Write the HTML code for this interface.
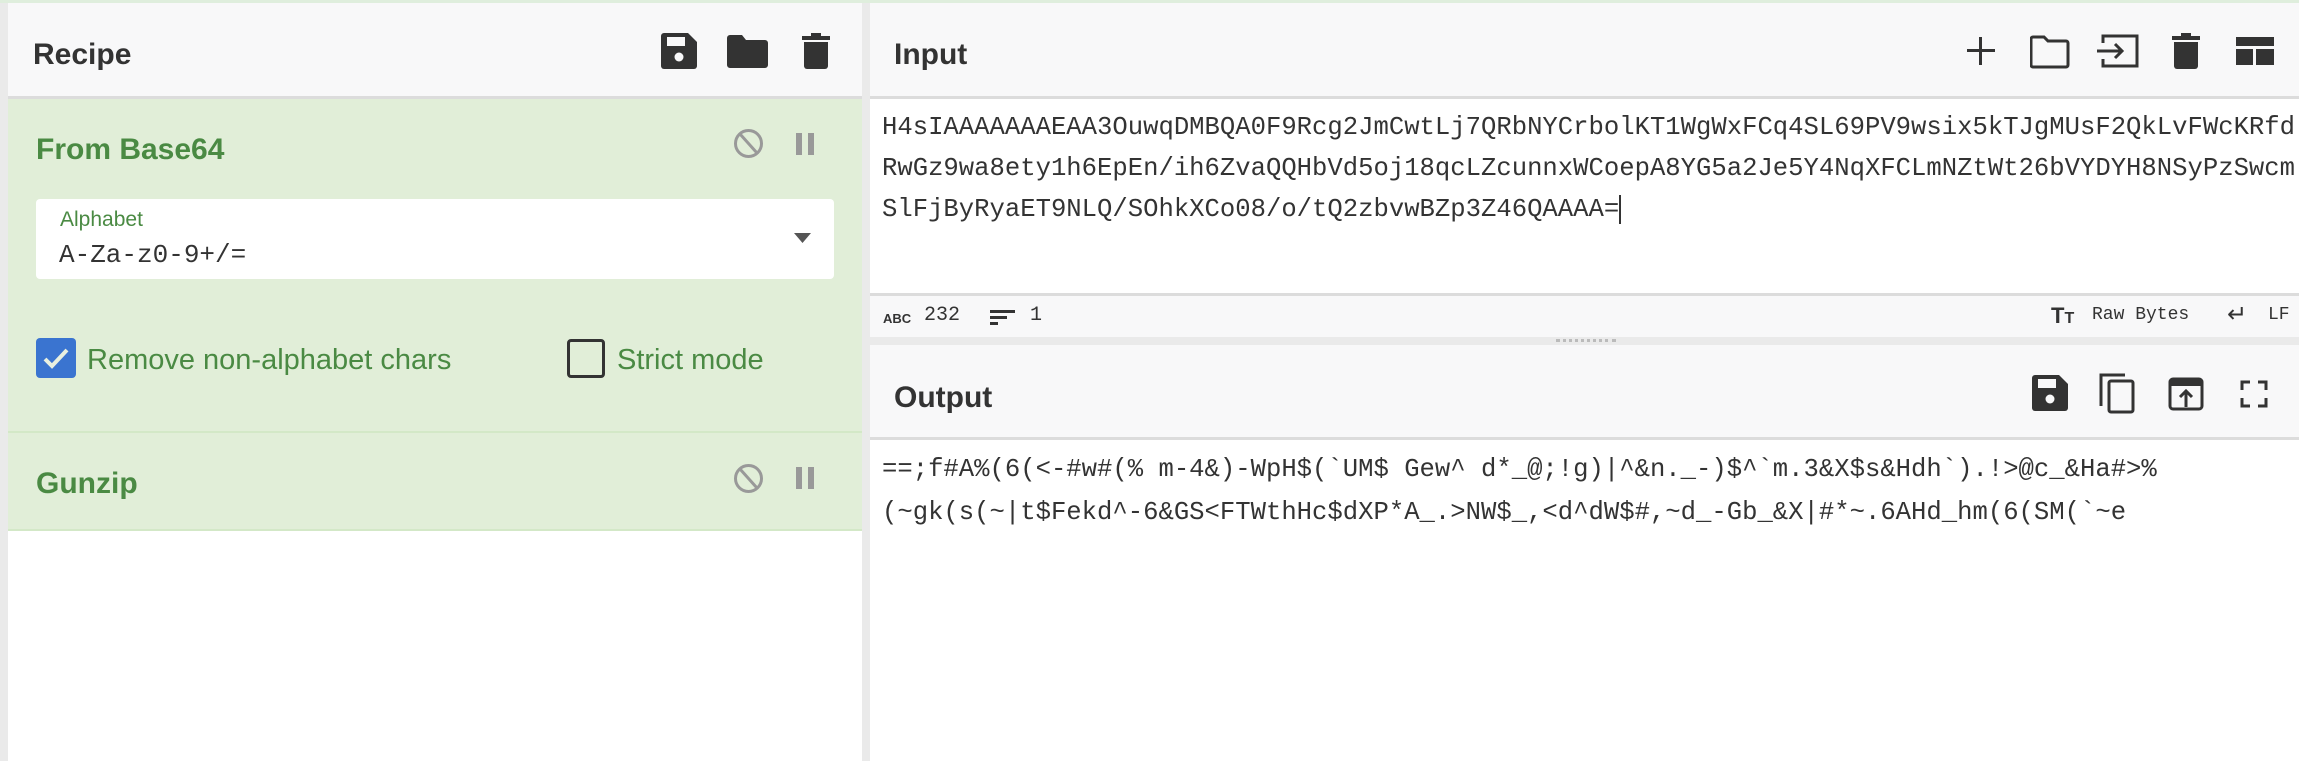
<!DOCTYPE html>
<html><head><style>
*{box-sizing:border-box;margin:0;padding:0}
body{width:2299px;height:761px;overflow:hidden;background:#eaeaea;font-family:"Liberation Sans",sans-serif;position:relative}
.a{position:absolute}
.mono{font-family:"Liberation Mono",monospace}
.hdr{background:#f8f8f9;border-bottom:3px solid #dcdcdc}
.t{font-size:30px;font-weight:bold;color:#333}
.g{color:#4a8a43}
svg{position:absolute}
</style></head><body>
<div class="a" style="left:0;top:0;width:2299px;height:3px;background:#dfeedd"></div>
<div class="a hdr" style="left:8px;top:3px;width:854px;height:96px"></div>
<div class="a t" style="left:33px;top:38px">Recipe</div>
<svg style="left:661px;top:33px" width="36" height="36" viewBox="0 0 36 36"><path d="M3 0h24l9 9v24a3 3 0 0 1-3 3H3a3 3 0 0 1-3-3V3a3 3 0 0 1 3-3z" fill="#333"/><rect x="6" y="4" width="18" height="9" fill="#f8f8f9"/><circle cx="18" cy="24" r="4.5" fill="#f8f8f9"/></svg>
<svg style="left:727px;top:35px" width="41" height="33" viewBox="0 0 41 33"><path d="M3 0h12l4 5h19a3 3 0 0 1 3 3v22a3 3 0 0 1-3 3H3a3 3 0 0 1-3-3V3a3 3 0 0 1 3-3z" fill="#333"/></svg>
<svg style="left:802px;top:33px" width="28" height="36" viewBox="0 0 28 36"><rect x="0" y="3" width="28" height="4" fill="#333"/><rect x="9" y="0" width="10" height="4" fill="#333"/><path d="M2 9h24v24a3 3 0 0 1-3 3H5a3 3 0 0 1-3-3z" fill="#333"/></svg>
<div class="a" style="left:8px;top:99px;width:854px;height:431px;background:#e1eed8"></div>
<div class="a" style="left:8px;top:431px;width:854px;height:2px;background:#d3e8c7"></div>
<div class="a" style="left:8px;top:529px;width:854px;height:2px;background:#d3e8c7"></div>
<div class="a" style="left:8px;top:531px;width:854px;height:230px;background:#fff"></div>
<div class="a t g" style="left:36px;top:133px">From Base64</div>
<div class="a t g" style="left:36px;top:467px">Gunzip</div>
<svg style="left:733px;top:128px" width="31" height="31" viewBox="0 0 31 31"><circle cx="15.5" cy="15.5" r="13" fill="none" stroke="#999" stroke-width="3"/><line x1="7" y1="6" x2="24" y2="25" stroke="#999" stroke-width="3"/></svg>
<svg style="left:796px;top:133px" width="19" height="22"><rect x="0" y="0" width="6" height="22" fill="#999"/><rect x="12" y="0" width="6" height="22" fill="#999"/></svg>
<svg style="left:733px;top:463px" width="31" height="31" viewBox="0 0 31 31"><circle cx="15.5" cy="15.5" r="13" fill="none" stroke="#999" stroke-width="3"/><line x1="7" y1="6" x2="24" y2="25" stroke="#999" stroke-width="3"/></svg>
<svg style="left:796px;top:467px" width="19" height="22"><rect x="0" y="0" width="6" height="22" fill="#999"/><rect x="12" y="0" width="6" height="22" fill="#999"/></svg>
<div class="a" style="left:36px;top:199px;width:798px;height:80px;background:#fff;border-radius:4px"></div>
<div class="a g" style="left:60px;top:208px;font-size:21px">Alphabet</div>
<div class="a mono" style="left:59px;top:240px;font-size:26px;color:#333">A-Za-z0-9+/=</div>
<svg style="left:794px;top:233px" width="17" height="10"><path d="M0 0h17L8.5 10z" fill="#555"/></svg>
<div class="a" style="left:36px;top:338px;width:40px;height:40px;background:#3a74d0;border-radius:4px"></div>
<svg style="left:36px;top:338px" width="40" height="40"><path d="M9 21l7 7 15-16" fill="none" stroke="#e8f0e0" stroke-width="4"/></svg>
<div class="a g" style="left:87px;top:344px;font-size:29px">Remove non-alphabet chars</div>
<div class="a" style="left:567px;top:339px;width:38px;height:39px;border:3px solid #333;border-radius:4px"></div>
<div class="a g" style="left:617px;top:344px;font-size:29px">Strict mode</div>
<div class="a hdr" style="left:870px;top:3px;width:1429px;height:96px"></div>
<div class="a t" style="left:894px;top:38px">Input</div>
<svg style="left:1967px;top:37px" width="28" height="28"><rect x="12" y="0" width="3" height="28" fill="#333"/><rect x="0" y="12" width="28" height="3" fill="#333"/></svg>
<svg style="left:2030px;top:33px" width="40" height="36" viewBox="0 0 40 36"><path d="M3 4h11l4 4h18a2 2 0 0 1 2 2v22a2 2 0 0 1-2 2H3a2 2 0 0 1-2-2V6a2 2 0 0 1 2-2z" fill="none" stroke="#333" stroke-width="3"/></svg>
<svg style="left:2097px;top:33px" width="44" height="36" viewBox="0 0 44 36"><path d="M6 10V3h34v30H6v-7" fill="none" stroke="#333" stroke-width="3"/><path d="M0 18h24M18 11l7 7-7 7" fill="none" stroke="#333" stroke-width="3"/></svg>
<svg style="left:2172px;top:33px" width="28" height="36"><rect x="0" y="3" width="28" height="4" fill="#333"/><rect x="9" y="0" width="10" height="4" fill="#333"/><path d="M2 9h24v24a3 3 0 0 1-3 3H5a3 3 0 0 1-3-3z" fill="#333"/></svg>
<svg style="left:2236px;top:37px" width="38" height="28"><rect width="38" height="9" fill="#333"/><rect y="12" width="17" height="16" fill="#333"/><rect x="20" y="12" width="18" height="16" fill="#333"/></svg>
<div class="a" style="left:870px;top:99px;width:1429px;height:194px;background:#fff"></div>
<div class="a mono" style="left:882px;top:107px;font-size:25.6px;line-height:41px;color:#333;white-space:pre">H4sIAAAAAAAEAA3OuwqDMBQA0F9Rcg2JmCwtLj7QRbNYCrbolKT1WgWxFCq4SL69PV9wsix5kTJgMUsF2QkLvFWcKRfd
RwGz9wa8ety1h6EpEn/ih6ZvaQQHbVd5oj18qcLZcunnxWCoepA8YG5a2Je5Y4NqXFCLmNZtWt26bVYDYH8NSyPzSwcm
SlFjByRyaET9NLQ/SOhkXCo08/o/tQ2zbvwBZp3Z46QAAAA=<span style="border-left:2px solid #333"></span></div>
<div class="a" style="left:870px;top:293px;width:1429px;height:44px;background:#f8f8f9;border-top:3px solid #dcdcdc"></div>
<div class="a" style="left:883px;top:311px;font-size:13px;font-weight:bold;color:#333">ABC</div>
<div class="a mono" style="left:924px;top:304px;font-size:20px;color:#333">232</div>
<svg style="left:990px;top:310px" width="25" height="16"><rect width="25" height="3" fill="#333"/><rect y="6" width="17" height="3" fill="#333"/><rect y="12" width="8" height="3" fill="#333"/></svg>
<div class="a mono" style="left:1030px;top:304px;font-size:20px;color:#333">1</div>
<div class="a" style="left:2051px;top:303px;font-size:22px;font-weight:bold;color:#333">T<span style="font-size:16px">T</span></div>
<div class="a mono" style="left:2092px;top:305px;font-size:18px;color:#333">Raw Bytes</div>
<div class="a" style="left:2227px;top:300px;font-size:24px;color:#333">↵</div>
<div class="a mono" style="left:2268px;top:305px;font-size:18px;color:#333">LF</div>
<div class="a" style="left:1556px;top:339px;width:60px;height:4px;border-top:3px dotted #bbb"></div>
<div class="a hdr" style="left:870px;top:345px;width:1429px;height:95px"></div>
<div class="a t" style="left:894px;top:381px">Output</div>
<svg style="left:2032px;top:375px" width="36" height="36" viewBox="0 0 36 36"><path d="M3 0h24l9 9v24a3 3 0 0 1-3 3H3a3 3 0 0 1-3-3V3a3 3 0 0 1 3-3z" fill="#333"/><rect x="6" y="4" width="18" height="9" fill="#f8f8f9"/><circle cx="18" cy="24" r="4.5" fill="#f8f8f9"/></svg>
<svg style="left:2098px;top:372px" width="38" height="42"><path d="M3 34V3h24" fill="none" stroke="#333" stroke-width="3"/><rect x="11" y="9" width="24" height="31" rx="2" fill="none" stroke="#333" stroke-width="3"/></svg>
<svg style="left:2168px;top:377px" width="36" height="34"><rect x="2" y="2" width="32" height="30" rx="3" fill="none" stroke="#333" stroke-width="3"/><rect x="2" y="2" width="32" height="7" fill="#333"/><path d="M18 30V14M12 20l6-6 6 6" fill="none" stroke="#333" stroke-width="3"/></svg>
<svg style="left:2240px;top:380px" width="28" height="28"><path d="M2 10V2h8M18 2h8v8M26 18v8h-8M10 26H2v-8" fill="none" stroke="#333" stroke-width="3"/></svg>
<div class="a" style="left:870px;top:440px;width:1429px;height:321px;background:#fff"></div>
<div class="a mono" style="left:882px;top:448px;font-size:25.6px;line-height:43px;color:#333;white-space:pre">==;f#A%(6(&lt;-#w#(% m-4&amp;)-WpH$(`UM$ Gew^ d*_@;!g)|^&amp;n._-)$^`m.3&amp;X$s&amp;Hdh`).!&gt;@c_&amp;Ha#&gt;%
(~gk(s(~|t$Fekd^-6&amp;GS&lt;FTWthHc$dXP*A_.&gt;NW$_,&lt;d^dW$#,~d_-Gb_&amp;X|#*~.6AHd_hm(6(SM(`~e</div>
</body></html>
